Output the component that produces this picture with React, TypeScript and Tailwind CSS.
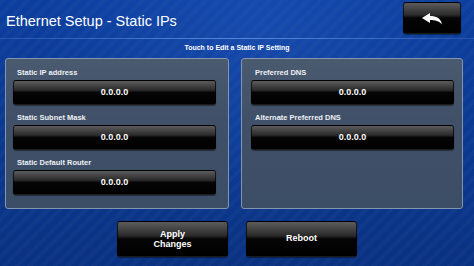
import React from "react";

const font = { fontFamily: '"Liberation Sans", Arial, sans-serif' };

const BlackButton = ({ children, className = "" }: { children: React.ReactNode; className?: string }) => (
  <div
    className={`flex items-center justify-center rounded-[3px] border border-black/70 bg-[linear-gradient(to_bottom,#5c5c5c_0%,#2a2a2a_40%,#050505_50%,#000_100%)] shadow-[0_1px_1px_rgba(0,0,0,0.4)] ${className}`}
  >
    {children}
  </div>
);

const Field = ({ label, value, first }: { label: string; value: string; first?: boolean }) => (
  <div className={first ? "" : "mt-[7px]"}>
    <div className="h-[12px] pl-[4px] text-[7.5px] font-bold leading-[12px] text-[#eef0f4]">{label}</div>
    <BlackButton className="mt-px h-[25px]">
      <span className="text-[9px] font-bold text-white">{value}</span>
    </BlackButton>
  </div>
);

const Panel = ({ fields, className = "" }: { fields: [string, string][]; className?: string }) => (
  <div
    className={`h-[151px] rounded-[3px] border border-[#8396ae] bg-[linear-gradient(to_bottom,#4a5a6f_0%,#3f5068_40%,#3c4e66_100%)] pt-[8px] ${className}`}
  >
    {fields.map(([l, v], i) => (
      <Field key={l} label={l} value={v} first={i === 0} />
    ))}
  </div>
);

export default function App() {
  return (
    <div
      style={font}
      className="relative h-[266px] w-[474px] overflow-hidden bg-[linear-gradient(to_bottom,#0c3e9f_0%,#0b3a93_45%,#0a3282_100%)]"
    >
      {/* diagonal stripe texture */}
      <div className="pointer-events-none absolute inset-0 bg-[repeating-linear-gradient(135deg,rgba(255,255,255,0.025)_0px,rgba(255,255,255,0.025)_4px,transparent_4px,transparent_9px)]" />
      <div className="pointer-events-none absolute inset-0 bg-[radial-gradient(ellipse_at_55%_10%,rgba(60,120,230,0.22),transparent_60%)]" />

      <div className="relative">
        {/* header */}
        <div className="flex h-[37px] items-start justify-between pr-[13px] pt-[2px]">
          <div className="pl-[6px] pt-[11px] text-[14.5px] leading-[16px] text-white">Ethernet Setup - Static IPs</div>
          <BlackButton className="h-[32px] w-[58px]">
            <svg width="20" height="12" viewBox="0 0 20 12" className="translate-y-px">
              <path d="M0 5 L8 0 V3 C14 3 19 5 20 11.5 C17 8 13 7 8 7 V10 Z" fill="white" />
            </svg>
          </BlackButton>
        </div>

        <div className="mt-[1px] h-px bg-[linear-gradient(to_right,rgba(90,140,220,0.3),rgba(110,160,235,0.7)_50%,rgba(90,140,220,0.3))]" />

        <div className="mt-[4px] text-center text-[7px] font-bold leading-[10px] text-white">
          Touch to Edit a Static IP Setting
        </div>

        {/* panels */}
        <div className="mt-[5px] flex gap-[12px] pl-[5px] pr-[11px]">
          <Panel
            className="w-[224px] pl-[7px] pr-[12px]"
            fields={[
              ["Static IP address", "0.0.0.0"],
              ["Static Subnet Mask", "0.0.0.0"],
              ["Static Default Router", "0.0.0.0"],
            ]}
          />
          <Panel
            className="w-[222px] pl-[9px] pr-[8px]"
            fields={[
              ["Preferred DNS", "0.0.0.0"],
              ["Alternate Preferred DNS", "0.0.0.0"],
            ]}
          />
        </div>

        {/* actions */}
        <div className="mt-[12px] flex justify-center gap-[18px]">
          <BlackButton className="h-[36px] w-[111px]">
            <span className="text-center text-[9px] font-bold leading-[10px] text-white">
              Apply
              <br />
              Changes
            </span>
          </BlackButton>
          <BlackButton className="h-[36px] w-[111px]">
            <span className="text-[9px] font-bold text-white">Reboot</span>
          </BlackButton>
        </div>
      </div>
    </div>
  );
}
